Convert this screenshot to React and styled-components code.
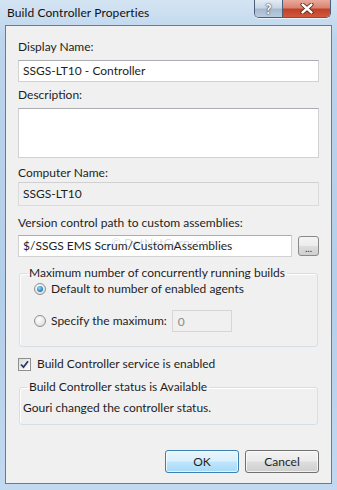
import React from 'react';
import styled, { createGlobalStyle } from 'styled-components';

const GlobalStyle = createGlobalStyle`
    html, body {
        margin: 0;
        padding: 0;
        width: 337px;
        height: 490px;
        overflow: hidden;
    }
    * {
        box-sizing: border-box;
    }
`;

const FONT = `Lato, "Liberation Sans", sans-serif`;

const Window = styled.div`
    width: 337px;
    height: 490px;
    display: flex;
    flex-direction: column;
    font-family: ${FONT};
    font-size: 12px;
    color: #1e1e1e;
    background: linear-gradient(180deg, #d4e4f3 0%, #bcd4ec 8%, #b4cfea 60%, #c2d9f0 100%);
`;

const TitleBar = styled.div`
    height: 25px;
    flex: none;
    display: flex;
    align-items: flex-start;
    justify-content: space-between;
    padding-left: 7px;
    padding-right: 6px;
`;

const Title = styled.span`
    line-height: 25px;
    color: #101010;
    font-size: 12px;
    letter-spacing: 0.1px;
`;

const CaptionButtons = styled.div`
    display: flex;
    height: 18px;
    border: 1px solid #4d5e78;
    border-top: none;
    border-radius: 0 0 5px 5px;
    overflow: hidden;
    box-shadow: 0 1px 0 rgba(255, 255, 255, 0.6);
`;

const CaptionButton = styled.div`
    width: ${p => p.$width}px;
    height: 100%;
    display: flex;
    align-items: center;
    justify-content: center;
    color: #fff;
    font-weight: 700;
    font-size: 13px;
    text-shadow: 0 0 2px #2b3a52, 0 0 1px #2b3a52;
    background: ${p => p.$close
        ? 'linear-gradient(180deg, #e9a99b 0%, #d98472 45%, #c24128 55%, #cf5a3d 100%)'
        : 'linear-gradient(180deg, #e3ebf4 0%, #c9d6e5 45%, #a7b9cf 55%, #b9cbe0 100%)'};
    & + & {
        border-left: 1px solid #4d5e78;
    }
`;

const Client = styled.div`
    flex: 1;
    margin: 0 5px 6px 5px;
    border: 1px solid #6c7a8c;
    background: #f0f0f0;
    padding: 13px 12px 10px 12px;
    display: flex;
    flex-direction: column;
`;

const Label = styled.div`
    line-height: 16px;
    height: 16px;
    margin-top: ${p => p.$top || 0}px;
    white-space: nowrap;
`;

const TextBox = styled.div`
    position: relative;
    height: ${p => p.$height}px;
    margin-top: ${p => p.$top || 0}px;
    background: ${p => (p.$readOnly ? '#f0f0f0' : '#ffffff')};
    border: 1px solid ${p => (p.$readOnly ? '#dadada' : '#d2d2d2')};
    border-top-color: ${p => (p.$readOnly ? '#d0d0d0' : '#abadb3')};
    padding: 0 4px;
    line-height: ${p => (p.$multi ? '18px' : `${p.$height - 2}px`)};
    white-space: nowrap;
    flex: ${p => (p.$grow ? 1 : 'none')};
    color: ${p => (p.$dim ? '#8a8a8a' : '#1e1e1e')};
`;

const Watermark = styled.span`
    position: absolute;
    left: 92px;
    top: -3px;
    color: rgba(110, 120, 140, 0.3);
    font-size: 12px;
    pointer-events: none;
`;

const PathRow = styled.div`
    display: flex;
    align-items: center;
    gap: 6px;
    margin-top: 4px;
`;

const SmallButton = styled.div`
    width: 21px;
    height: 20px;
    flex: none;
    border: 1px solid #8a8a8a;
    border-radius: 3px;
    background: linear-gradient(180deg, #f4f4f4 0%, #ececec 48%, #dddddd 52%, #d0d0d0 100%);
    font-size: 10px;
    text-align: center;
    line-height: 22px;
    color: #333;
`;

const GroupBox = styled.fieldset`
    margin: ${p => p.$top}px 1px 0 1px;
    padding: ${p => p.$pad};
    border: 1px solid #d5dfe5;
    border-radius: 3px;
    box-shadow: inset 1px 1px 0 #ffffff;
    min-inline-size: 0;
`;

const Legend = styled.legend`
    padding: 0 2px;
    line-height: 16px;
    margin-left: -1px;
`;

const OptionRow = styled.label`
    display: flex;
    align-items: center;
    min-height: ${p => p.$height || 16}px;
    margin-top: ${p => p.$top || 0}px;
    margin-left: ${p => p.$indent || 0}px;
    line-height: 16px;
    white-space: nowrap;
`;

const Radio = styled.span`
    width: 12px;
    height: 12px;
    flex: none;
    border-radius: 50%;
    border: 1px solid #8e8f8f;
    background: radial-gradient(circle at 40% 35%, #ffffff 0%, #e6e6e6 60%, #cfcfcf 100%);
    margin-right: 5px;
    display: flex;
    align-items: center;
    justify-content: center;
    &::after {
        content: '';
        width: 6px;
        height: 6px;
        border-radius: 50%;
        display: ${p => (p.$checked ? 'block' : 'none')};
        background: radial-gradient(circle at 40% 35%, #9fd3f6 0%, #2f8fd3 55%, #145a9b 100%);
    }
`;

const SmallInput = styled.div`
    width: 60px;
    height: 22px;
    margin-left: 5px;
    border: 1px solid #d6d6d6;
    background: #f0f0f0;
    color: #8a8a8a;
    padding-left: 5px;
    line-height: 22px;
`;

const CheckBox = styled.span`
    width: 13px;
    height: 13px;
    flex: none;
    border: 1px solid #8e8f8f;
    background: linear-gradient(135deg, #dcdcdc 0%, #ffffff 100%);
    margin-right: 6px;
    display: flex;
    align-items: center;
    justify-content: center;
`;

const StatusText = styled.div`
    line-height: 16px;
    margin-left: -5px;
`;

const ButtonRow = styled.div`
    margin-top: auto;
    display: flex;
    justify-content: flex-end;
    gap: 6px;
`;

const DialogButton = styled.div`
    width: 74px;
    height: 23px;
    border-radius: 3px;
    border: 1px solid ${p => (p.$default ? '#3c7fb1' : '#707070')};
    background: ${p => p.$default
        ? 'linear-gradient(180deg, #eaf6fd 0%, #d9f0fc 48%, #bee6fd 52%, #a7d9f5 100%)'
        : 'linear-gradient(180deg, #f2f2f2 0%, #ebebeb 48%, #dddddd 52%, #cfcfcf 100%)'};
    box-shadow: inset 0 0 0 1px rgba(255, 255, 255, 0.7);
    text-align: center;
    line-height: 21px;
`;

const CheckMark = () => (
    <svg width="9" height="9" viewBox="0 0 9 9">
        <path d="M1 4.5 L3.5 7.2 L8 1.2" fill="none" stroke="#263a6a" strokeWidth="1.8" />
    </svg>
);

const CloseGlyph = () => (
    <svg width="14" height="11" viewBox="0 0 14 11">
        <path d="M2.5 1.5 L11.5 9.5 M11.5 1.5 L2.5 9.5" stroke="#4a1a10" strokeWidth="4" strokeLinecap="round" />
        <path d="M2.5 1.5 L11.5 9.5 M11.5 1.5 L2.5 9.5" stroke="#ffffff" strokeWidth="2.4" strokeLinecap="round" />
    </svg>
);

const App = () => {
    return (
        <Window>
            <GlobalStyle />
            <TitleBar>
                <Title>Build Controller Properties</Title>
                <CaptionButtons>
                    <CaptionButton $width={27}>?</CaptionButton>
                    <CaptionButton $width={48} $close><CloseGlyph /></CaptionButton>
                </CaptionButtons>
            </TitleBar>
            <Client>
                <Label>Display Name:</Label>
                <TextBox $height={22} $top={5}>SSGS-LT10 - Controller</TextBox>
                <Label $top={5}>Description:</Label>
                <TextBox $height={50} $top={5} $multi />
                <Label $top={7}>Computer Name:</Label>
                <TextBox $height={24} $top={1} $readOnly>SSGS-LT10</TextBox>
                <Label $top={9}>Version control path to custom assemblies:</Label>
                <PathRow>
                    <TextBox $height={22} $grow>
                        $/SSGS EMS Scrum/CustomAssemblies
                        <Watermark>© DotNetCurry.com</Watermark>
                    </TextBox>
                    <SmallButton>...</SmallButton>
                </PathRow>
                <GroupBox $top={8} $pad="0 8px 14px 8px">
                    <Legend>Maximum number of concurrently running builds</Legend>
                    <OptionRow $indent={6}>
                        <Radio $checked />
                        Default to number of enabled agents
                    </OptionRow>
                    <OptionRow $indent={6} $top={13} $height={22}>
                        <Radio />
                        Specify the maximum:
                        <SmallInput>0</SmallInput>
                    </OptionRow>
                </GroupBox>
                <OptionRow $top={9}>
                    <CheckBox><CheckMark /></CheckBox>
                    Build Controller service is enabled
                </OptionRow>
                <GroupBox $top={7} $pad="5px 8px 8px 8px">
                    <Legend>Build Controller status is Available</Legend>
                    <StatusText>Gouri changed the controller status.</StatusText>
                </GroupBox>
                <ButtonRow>
                    <DialogButton $default>OK</DialogButton>
                    <DialogButton>Cancel</DialogButton>
                </ButtonRow>
            </Client>
        </Window>
    );
};

export default App;
